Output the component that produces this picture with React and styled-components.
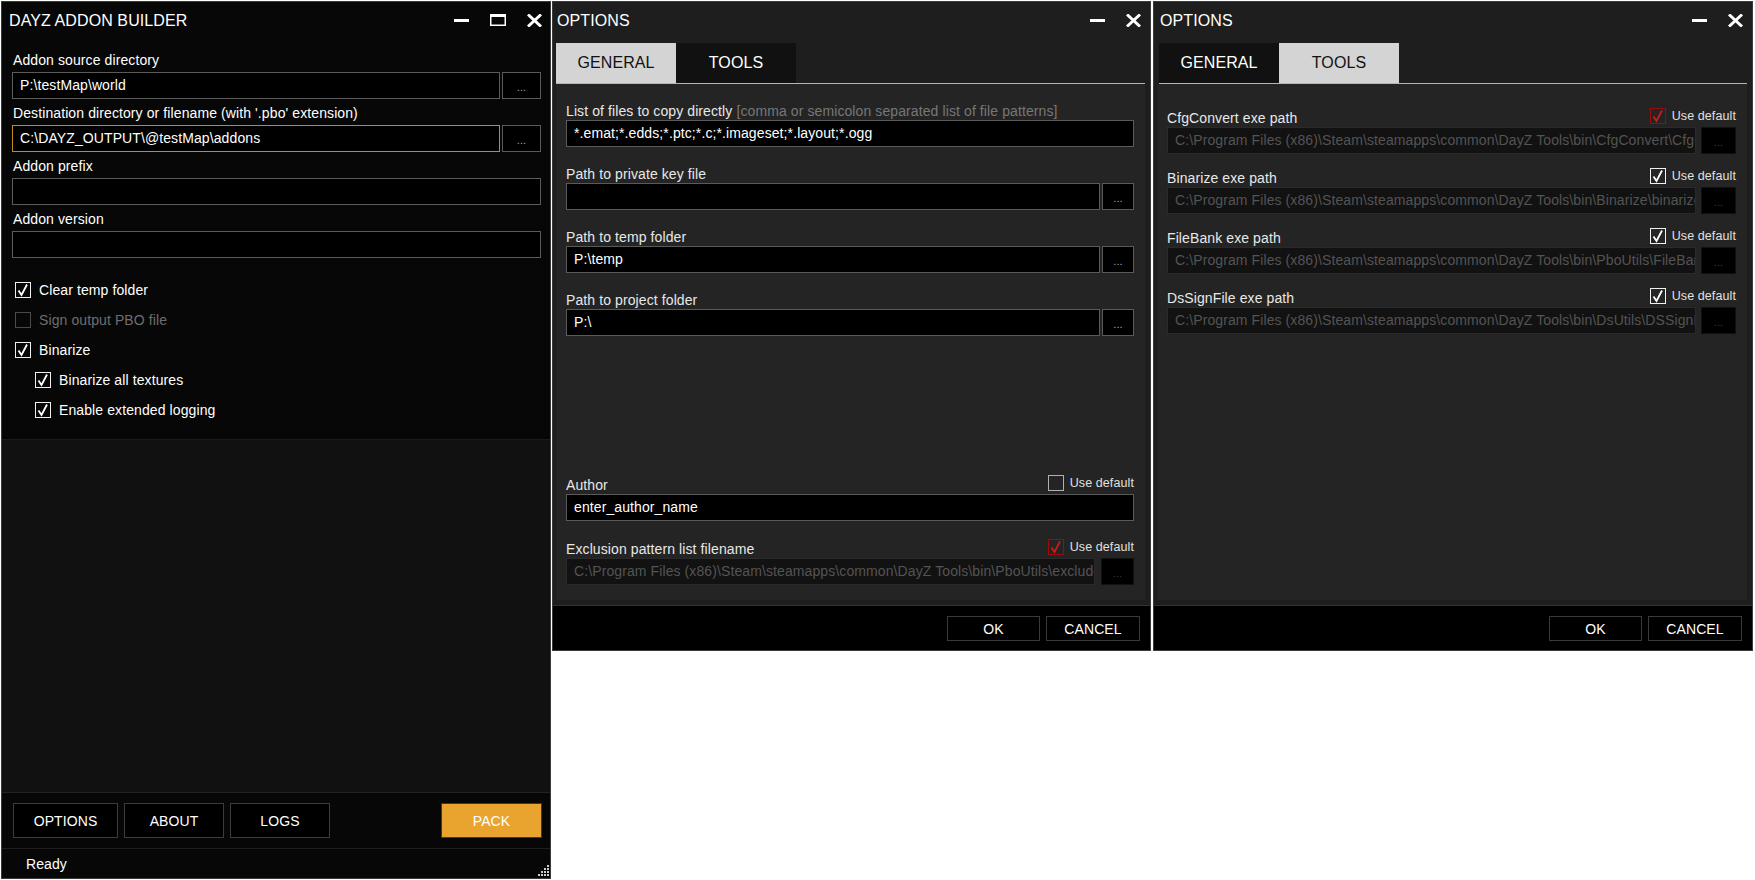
import styled, { createGlobalStyle } from "styled-components"

const FONT = `"Liberation Sans", Arial, sans-serif`

const GlobalStyle = createGlobalStyle`
  html, body {
    margin: 0;
    padding: 0;
    background: #fff;
  }
  body {
    font-family: ${FONT};
  }
  * {
    box-sizing: border-box;
  }
`

const TOOLS_BIN = "C:\\Program Files (x86)\\Steam\\steamapps\\common\\DayZ Tools\\bin\\"

const toolPaths = [
    { label: "CfgConvert exe path", path: TOOLS_BIN + "CfgConvert\\CfgConvert.exe", focused: true },
    { label: "Binarize exe path", path: TOOLS_BIN + "Binarize\\binarize.exe" },
    { label: "FileBank exe path", path: TOOLS_BIN + "PboUtils\\FileBank.exe" },
    { label: "DsSignFile exe path", path: TOOLS_BIN + "DsUtils\\DSSignFile.exe" },
]

function MinimizeIcon() {
    return (
        <svg width="15" height="3" viewBox="0 0 15 3">
            <rect width="15" height="3" fill="#fff" />
        </svg>
    )
}

function MaximizeIcon() {
    return (
        <svg width="16" height="12" viewBox="0 0 16 12">
            <rect x="0.75" y="0.75" width="14.5" height="10.5" fill="none" stroke="#fff" strokeWidth="1.5" />
            <rect width="16" height="3" fill="#fff" />
        </svg>
    )
}

function CloseIcon() {
    return (
        <svg width="15" height="13" viewBox="0 0 15 13">
            <path d="M1 0.5 L14 12.5 M14 0.5 L1 12.5" stroke="#fff" strokeWidth="3" />
        </svg>
    )
}

function ResizeGrip() {
    const dots = []
    for (let row = 0; row < 4; row++) {
        for (let col = 3 - row; col < 4; col++) {
            dots.push(<rect key={`${row}-${col}`} x={col * 3} y={row * 3} width="2" height="2" fill="#cfcfcf" />)
        }
    }
    return (
        <Grip width="11" height="11" viewBox="0 0 11 11">
            {dots}
        </Grip>
    )
}

function Checkbox({ checked, variant }) {
    return (
        <Box $variant={variant} $checked={checked}>
            {checked && (
                <svg width="14" height="14" viewBox="0 0 14 14">
                    <polyline points="2.5,7.5 5.5,12 11,1.5" fill="none"
                        stroke={variant === "red" ? "#d01a1a" : "#fff"} strokeWidth="1.8" />
                </svg>
            )}
        </Box>
    )
}

function Field({ label, value, active, browse }) {
    return (
        <FieldBlock>
            <FieldLabel>{label}</FieldLabel>
            <InputRow $gap={2}>
                <TextBox $active={active}>{value}</TextBox>
                {browse && <Browse $width={39}>...</Browse>}
            </InputRow>
        </FieldBlock>
    )
}

function BuilderWindow() {
    return (
        <Window $width={550} $height={878} $bg="#070707">
            <TitleBar $pl={7} $pr={8}>
                <Title>DAYZ ADDON BUILDER</Title>
                <Controls>
                    <MinimizeIcon />
                    <MaximizeIcon />
                    <CloseIcon />
                </Controls>
            </TitleBar>
            <MainForm>
                <Field label="Addon source directory" value="P:\testMap\world" browse />
                <Field label="Destination directory or filename (with '.pbo' extension)"
                    value="C:\DAYZ_OUTPUT\@testMap\addons" active browse />
                <Field label="Addon prefix" value="" />
                <Field label="Addon version" value="" />
                <CheckList>
                    <CheckRow>
                        <Checkbox checked />
                        <CheckLabel>Clear temp folder</CheckLabel>
                    </CheckRow>
                    <CheckRow>
                        <Checkbox variant="dim" />
                        <CheckLabel $dim>Sign output PBO file</CheckLabel>
                    </CheckRow>
                    <CheckRow>
                        <Checkbox checked />
                        <CheckLabel>Binarize</CheckLabel>
                    </CheckRow>
                    <CheckRow $indent>
                        <Checkbox checked />
                        <CheckLabel>Binarize all textures</CheckLabel>
                    </CheckRow>
                    <CheckRow $indent>
                        <Checkbox checked />
                        <CheckLabel>Enable extended logging</CheckLabel>
                    </CheckRow>
                </CheckList>
            </MainForm>
            <EmptyArea />
            <MainFooter>
                <FooterButton $width={105}>OPTIONS</FooterButton>
                <FooterButton $width={100}>ABOUT</FooterButton>
                <FooterButton $width={100}>LOGS</FooterButton>
                <Spacer />
                <FooterButton $width={101} $primary>PACK</FooterButton>
            </MainFooter>
            <StatusBar>
                <span>Ready</span>
                <ResizeGrip />
            </StatusBar>
        </Window>
    )
}

function OptionRow({ label, hint, value, disabled, useDefault, focused, browse, browseWidth, gap }) {
    return (
        <FormRow>
            <RowHeader>
                <RowLabel>
                    {label}
                    {hint && <Hint> {hint}</Hint>}
                </RowLabel>
                {useDefault !== undefined && (
                    <UseDefault>
                        <Checkbox checked={useDefault} variant={focused ? "red" : "light"} />
                        <span>Use default</span>
                    </UseDefault>
                )}
            </RowHeader>
            <InputRow $gap={gap}>
                <TextBox $disabled={disabled}>{value}</TextBox>
                {browse && <Browse $width={browseWidth} $disabled={disabled}>...</Browse>}
            </InputRow>
        </FormRow>
    )
}

function OptionsWindow({ tab, offset, inset = 0 }) {
    return (
        <Window $width={tab === "general" ? 599 : 600} $height={650} $bg="#1e1e1e" $offset={offset}>
            <TitleBar $pl={4 + inset} $pr={9}>
                <Title>OPTIONS</Title>
                <Controls>
                    <MinimizeIcon />
                    <CloseIcon />
                </Controls>
            </TitleBar>
            <TabBar $inset={inset}>
                <Tab $active={tab === "general"}>GENERAL</Tab>
                <Tab $active={tab === "tools"}>TOOLS</Tab>
            </TabBar>
            {tab === "general" ? (
                <TabPanel $top={17}>
                    <RowGroup $gap={17}>
                        <OptionRow label="List of files to copy directly"
                            hint="[comma or semicolon separated list of file patterns]"
                            value="*.emat;*.edds;*.ptc;*.c;*.imageset;*.layout;*.ogg" />
                        <OptionRow label="Path to private key file" value="" browse browseWidth={32} gap={2} />
                        <OptionRow label="Path to temp folder" value="P:\temp" browse browseWidth={32} gap={2} />
                        <OptionRow label="Path to project folder" value="P:\" browse browseWidth={32} gap={2} />
                    </RowGroup>
                    <RowGroup $gap={18}>
                        <OptionRow label="Author" value="enter_author_name" useDefault={false} />
                        <OptionRow label="Exclusion pattern list filename"
                            value={TOOLS_BIN + "PboUtils\\exclude.lst"} disabled useDefault focused
                            browse browseWidth={33} gap={6} />
                    </RowGroup>
                </TabPanel>
            ) : (
                <TabPanel $top={24}>
                    <RowGroup $gap={14}>
                        {toolPaths.map(t => (
                            <OptionRow key={t.label} label={t.label} value={t.path} disabled useDefault
                                focused={t.focused} browse browseWidth={35} gap={5} />
                        ))}
                    </RowGroup>
                </TabPanel>
            )}
            <DialogFooter>
                <DialogButton $width={93}>OK</DialogButton>
                <DialogButton $width={94}>CANCEL</DialogButton>
            </DialogFooter>
        </Window>
    )
}

export default function App() {
    return (
        <>
            <GlobalStyle />
            <Desktop>
                <BuilderWindow />
                <OptionsWindow tab="general" />
                <OptionsWindow tab="tools" offset={1} inset={2} />
            </Desktop>
        </>
    )
}

const Desktop = styled.div`
    display: flex;
    align-items: flex-start;
    gap: 1px;
    padding: 1px 0 0 1px;
`
const Window = styled.div`
    display: flex;
    flex-direction: column;
    flex: none;
    width: ${p => p.$width}px;
    height: ${p => p.$height}px;
    margin-left: ${p => p.$offset || 0}px;
    background: ${p => p.$bg};
    border: 1px solid #3b3b3b;
    color: #fff;
    font-family: ${FONT};
    font-size: 14px;
    letter-spacing: 0.1px;
`
const TitleBar = styled.div`
    flex: none;
    height: 36px;
    display: flex;
    align-items: center;
    justify-content: space-between;
    padding: 0 ${p => p.$pr}px 0 ${p => p.$pl}px;
`
const Title = styled.div`
    padding-top: 2px;
    font-size: 16px;
    color: #fff;
`
const Controls = styled.div`
    display: flex;
    align-items: center;
    gap: 21px;
`
const MainForm = styled.div`
    display: flex;
    flex-direction: column;
    gap: 5px;
    padding: 13px 9px 14px 10px;
    border-bottom: 1px solid #1b1b1b;
`
const FieldBlock = styled.div`
    display: flex;
    flex-direction: column;
`
const FieldLabel = styled.div`
    height: 19px;
    line-height: 19px;
    margin-bottom: 2px;
    padding-left: 1px;
    color: #fff;
`
const InputRow = styled.div`
    display: flex;
    gap: ${p => p.$gap || 0}px;
`
const TextBox = styled.div`
    flex: 1;
    min-width: 0;
    height: 27px;
    line-height: 25px;
    padding: 0 7px;
    overflow: hidden;
    white-space: nowrap;
    background: ${p => p.$disabled ? "#121212" : "#000"};
    border: 1px solid ${p => p.$active ? "#c48a1c" : p.$disabled ? "#2a2a2a" : "#5a5a5a"};
    color: ${p => p.$disabled ? "#545454" : "#fff"};
`
const Browse = styled.div`
    flex: none;
    width: ${p => p.$width}px;
    height: 27px;
    display: flex;
    align-items: center;
    justify-content: center;
    padding-top: 3px;
    font-size: 11px;
    background: #000;
    border: 1px solid ${p => p.$disabled ? "#111" : "#5a5a5a"};
    color: ${p => p.$disabled ? "#3c3c3c" : "#a8a8a8"};
`
const CheckList = styled.div`
    display: flex;
    flex-direction: column;
    margin-top: 12px;
`
const CheckRow = styled.div`
    height: 30px;
    display: flex;
    align-items: center;
    gap: 8px;
    padding-left: ${p => p.$indent ? 23 : 3}px;
`
const CheckLabel = styled.span`
    color: ${p => p.$dim ? "#6e6e6e" : "#fff"};
`
const Box = styled.div`
    flex: none;
    width: 16px;
    height: 16px;
    display: flex;
    align-items: center;
    justify-content: center;
    border: 1px solid ${p =>
        p.$variant === "red" ? "#9a0c0c" :
        p.$variant === "dim" ? "#4a4a4a" :
        p.$variant === "light" && !p.$checked ? "#b0b0b0" : "#f0f0f0"};
`
const EmptyArea = styled.div`
    flex: 1;
    background: #111;
`
const MainFooter = styled.div`
    flex: none;
    display: flex;
    gap: 6px;
    padding: 10px 8px 10px 11px;
    border-top: 1px solid #232323;
`
const Spacer = styled.div`
    flex: 1;
`
const FooterButton = styled.div`
    width: ${p => p.$width}px;
    height: 35px;
    display: flex;
    align-items: center;
    justify-content: center;
    background: ${p => p.$primary ? "#e9a430" : "#000"};
    border: 1px solid ${p => p.$primary ? "#3a3a3a" : "#3c3c3c"};
    color: #fff;
`
const StatusBar = styled.div`
    flex: none;
    height: 30px;
    display: flex;
    align-items: center;
    justify-content: space-between;
    padding: 0 1px 0 24px;
    border-top: 1px solid #1e1e1e;
    color: #fff;
`
const Grip = styled.svg`
    align-self: flex-end;
    margin-bottom: 2px;
`
const TabBar = styled.div`
    flex: none;
    display: flex;
    margin: 5px 5px 0 ${p => 3 + p.$inset}px;
    border-bottom: 1px solid #b5b5b5;
`
const Tab = styled.div`
    width: 120px;
    height: 40px;
    display: flex;
    align-items: center;
    justify-content: center;
    font-size: 16px;
    background: ${p => p.$active ? "#d4d4d4" : "#111"};
    color: ${p => p.$active ? "#111" : "#fff"};
`
const TabPanel = styled.div`
    flex: 1;
    display: flex;
    flex-direction: column;
    justify-content: space-between;
    margin: 0 5px 5px 3px;
    padding: ${p => p.$top}px 11px 15px 10px;
    background: #242424;
`
const RowGroup = styled.div`
    display: flex;
    flex-direction: column;
    gap: ${p => p.$gap}px;
`
const FormRow = styled.div`
    display: flex;
    flex-direction: column;
`
const RowHeader = styled.div`
    height: 19px;
    display: flex;
    align-items: flex-end;
    justify-content: space-between;
`
const RowLabel = styled.div`
    line-height: 18px;
    color: #e8e8e8;
`
const Hint = styled.span`
    color: #777;
`
const UseDefault = styled.div`
    display: flex;
    align-items: center;
    gap: 6px;
    margin-bottom: 3px;
    font-size: 12.5px;
    line-height: 14px;
    color: #e0e0e0;
`
const DialogFooter = styled.div`
    flex: none;
    height: 45px;
    display: flex;
    justify-content: flex-end;
    gap: 6px;
    padding: 10px 10px 0 0;
    background: #000;
    border-top: 1px solid #333;
`
const DialogButton = styled.div`
    width: ${p => p.$width}px;
    height: 25px;
    display: flex;
    align-items: center;
    justify-content: center;
    background: #000;
    border: 1px solid #3a3a3a;
    color: #fff;
`
